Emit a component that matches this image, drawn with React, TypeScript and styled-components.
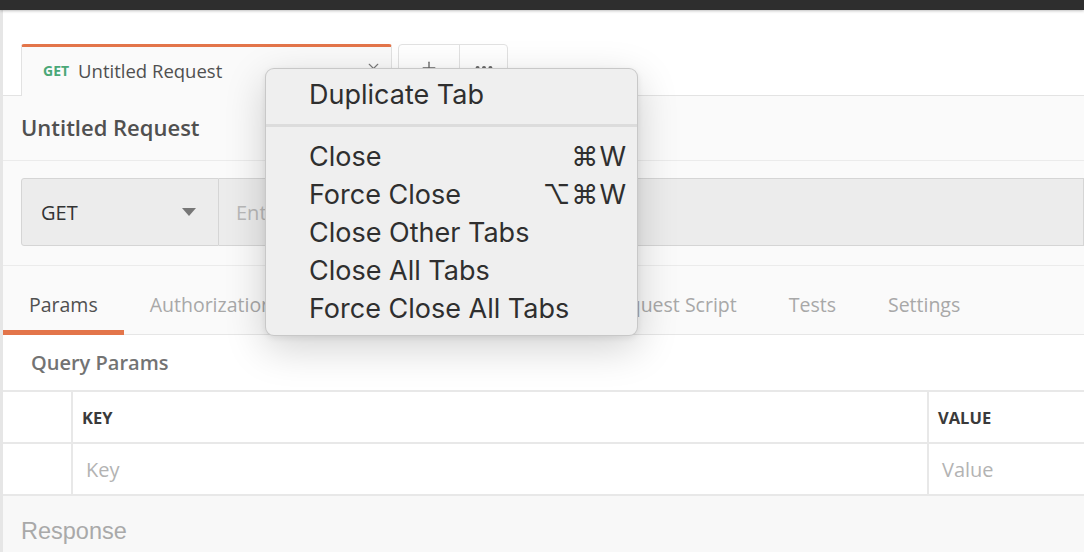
import styled, { createGlobalStyle } from 'styled-components'
import { X, Plus, Ellipsis } from 'lucide-react'

const GlobalStyle = createGlobalStyle`
  html, body {
    margin: 0;
    padding: 0;
    background: #ffffff;
  }
  body {
    font-family: "Open Sans", "Noto Sans", sans-serif;
  }
`

const menuItems = [
  { label: 'Close', keys: '⌘W' },
  { label: 'Force Close', keys: '⌥⌘W' },
  { label: 'Close Other Tabs', keys: '' },
  { label: 'Close All Tabs', keys: '' },
  { label: 'Force Close All Tabs', keys: '' },
]

const requestTabs = [
  { label: 'Params' },
  { label: 'Authorization' },
  { label: 'Headers', count: 7 },
  { label: 'Body' },
  { label: 'Pre-request Script' },
  { label: 'Tests' },
  { label: 'Settings' },
]

export const App = () => {
  return (
    <Screen>
      <GlobalStyle />
      <TitleBar />
      <Main>
        <TabBar>
          <RequestTab>
            <Method>GET</Method>
            <TabTitle>Untitled Request</TabTitle>
            <CloseIcon>
              <X size={17} strokeWidth={1.6} />
            </CloseIcon>
          </RequestTab>
          <TabActions>
            <ActionCell size={60}>
              <Plus size={20} strokeWidth={1.6} />
            </ActionCell>
            <ActionCell size={47}>
              <Ellipsis size={22} strokeWidth={2.4} />
            </ActionCell>
          </TabActions>
        </TabBar>

        <TitleRow>
          <Heading>Untitled Request</Heading>
        </TitleRow>

        <UrlRow>
          <MethodSelect>
            <span>GET</span>
            <Caret />
          </MethodSelect>
          <UrlInput>Enter request URL</UrlInput>
        </UrlRow>

        <TabsRow>
          {requestTabs.map((t, i) => (
            <TabItem key={t.label} active={i === 0}>
              {t.label}
              {t.count && <Count>({t.count})</Count>}
            </TabItem>
          ))}
        </TabsRow>

        <SectionLabel>Query Params</SectionLabel>

        <TableRow>
          <Cell width={70} />
          <Cell grow>
            <HeadText>KEY</HeadText>
          </Cell>
          <Cell width={155} last>
            <HeadText>VALUE</HeadText>
          </Cell>
        </TableRow>
        <TableRow>
          <Cell width={70} />
          <Cell grow>
            <Placeholder>Key</Placeholder>
          </Cell>
          <Cell width={155} last>
            <Placeholder>Value</Placeholder>
          </Cell>
        </TableRow>

        <ResponsePane>Response</ResponsePane>
      </Main>

      <ContextMenu>
        <MenuItem>
          <span>Duplicate Tab</span>
        </MenuItem>
        <Separator />
        {menuItems.map((m) => (
          <MenuItem key={m.label}>
            <span>{m.label}</span>
            <Shortcut>{m.keys}</Shortcut>
          </MenuItem>
        ))}
      </ContextMenu>
    </Screen>
  )
}
export default App

const Screen = styled.div`
  position: relative;
  width: 1084px;
  height: 552px;
  overflow: hidden;
  display: flex;
  flex-direction: column;
  background: #ffffff;
`

const TitleBar = styled.div`
  height: 10px;
  flex-shrink: 0;
  background: #2e2e2e;
  box-shadow: 0 1px 3px rgba(0, 0, 0, 0.25);
  position: relative;
  z-index: 1;
`

const Main = styled.div`
  flex: 1;
  display: flex;
  flex-direction: column;
  border-left: 3px solid #e6e6e6;
`

const TabBar = styled.div`
  height: 86px;
  flex-shrink: 0;
  box-sizing: border-box;
  display: flex;
  align-items: flex-start;
  padding: 34px 0 0 18px;
  border-bottom: 1px solid #e3e3e3;
  background: #ffffff;
`

const RequestTab = styled.div`
  width: 371px;
  height: 52px;
  box-sizing: border-box;
  display: flex;
  align-items: center;
  padding: 0 0 2px 21px;
  background: #fafafa;
  border: 1px solid #e2e2e2;
  border-top: 3px solid #e3754a;
  border-bottom: none;
  border-radius: 3px 3px 0 0;
  position: relative;
  z-index: 1;
`

const Method = styled.span`
  font-size: 14px;
  font-weight: 700;
  color: #4aa877;
  margin-right: 9px;
`

const TabTitle = styled.span`
  font-size: 18.5px;
  color: #505050;
  flex: 1;
`

const CloseIcon = styled.span`
  display: flex;
  color: #7a7a7a;
  margin-right: 9px;
  margin-top: -4px;
`

const TabActions = styled.div`
  display: flex;
  margin-left: 6px;
  height: 46px;
  border: 1px solid #e2e2e2;
  border-radius: 4px;
`

const ActionCell = styled.div<{ size: number }>`
  width: ${(p) => p.size}px;
  display: flex;
  justify-content: center;
  align-items: center;
  color: #666666;
  & + & {
    border-left: 1px solid #e2e2e2;
  }
`

const TitleRow = styled.div`
  height: 65px;
  flex-shrink: 0;
  box-sizing: border-box;
  display: flex;
  align-items: center;
  padding: 0 0 3px 18px;
  background: #fafafa;
  border-bottom: 1px solid #ebebeb;
`

const Heading = styled.h1`
  margin: 0;
  font-size: 22px;
  font-weight: 600;
  color: #505050;
`

const UrlRow = styled.div`
  height: 105px;
  flex-shrink: 0;
  box-sizing: border-box;
  display: flex;
  align-items: flex-start;
  padding: 17px 0 0 18px;
  background: #fafafa;
  border-bottom: 1px solid #ebebeb;
`

const MethodSelect = styled.div`
  width: 198px;
  height: 68px;
  box-sizing: border-box;
  display: flex;
  align-items: center;
  justify-content: space-between;
  padding: 0 22px 0 19px;
  background: #ececec;
  border: 1px solid #d5d5d5;
  border-radius: 3px 0 0 3px;
  font-size: 20px;
  font-weight: 500;
  color: #333333;
`

const Caret = styled.span`
  width: 0;
  height: 0;
  border-left: 7px solid transparent;
  border-right: 7px solid transparent;
  border-top: 8px solid #777777;
`

const UrlInput = styled.div`
  flex: 1;
  height: 68px;
  box-sizing: border-box;
  display: flex;
  align-items: center;
  padding-left: 17px;
  background: #ececec;
  border: 1px solid #d5d5d5;
  border-left: none;
  font-size: 20px;
  color: #b8b8b8;
`

const TabsRow = styled.div`
  height: 69px;
  flex-shrink: 0;
  box-sizing: border-box;
  display: flex;
  background: #fafafa;
  border-bottom: 1px solid #e6e6e6;
`

const TabItem = styled.div<{ active?: boolean }>`
  display: flex;
  align-items: center;
  padding: 12px 26px 0;
  font-size: 19.5px;
  color: ${(p) => (p.active ? '#505050' : '#a8a8a8')};
  border-bottom: 5px solid ${(p) => (p.active ? '#e3754a' : 'transparent')};
  margin-bottom: -1px;
`

const Count = styled.span`
  font-size: 15px;
  margin-left: 4px;
`

const SectionLabel = styled.div`
  height: 57px;
  flex-shrink: 0;
  box-sizing: border-box;
  display: flex;
  align-items: center;
  padding-left: 28px;
  font-size: 20px;
  font-weight: 600;
  color: #737373;
  border-bottom: 2px solid #e8e8e8;
`

const TableRow = styled.div`
  display: flex;
  height: 52px;
  flex-shrink: 0;
  box-sizing: border-box;
  border-bottom: 2px solid #e8e8e8;
`

const Cell = styled.div<{ width?: number; grow?: boolean; last?: boolean }>`
  ${(p) => (p.grow ? 'flex: 1;' : `width: ${p.width}px;`)}
  display: flex;
  align-items: center;
  padding-left: 9px;
  box-sizing: border-box;
  border-right: ${(p) => (p.last ? 'none' : '2px solid #e8e8e8')};
`

const HeadText = styled.span`
  font-size: 16.5px;
  font-weight: 700;
  color: #3a3a3a;
`

const Placeholder = styled.span`
  font-size: 20px;
  color: #b3b3b3;
  padding-left: 4px;
`

const ResponsePane = styled.div`
  flex: 1;
  background: #f8f8f8;
  padding: 22px 0 0 18px;
  font-family: "Liberation Sans", Arial, sans-serif;
  font-size: 23.5px;
  color: #a9a9a9;
`

const ContextMenu = styled.div`
  position: absolute;
  left: 265px;
  top: 68px;
  width: 373px;
  box-sizing: border-box;
  padding: 6px 0 8px;
  background: #efefef;
  border: 1px solid rgba(0, 0, 0, 0.16);
  border-radius: 9px;
  box-shadow: 0 12px 40px rgba(0, 0, 0, 0.18), 0 2px 6px rgba(0, 0, 0, 0.08);
  font-family: Inter, "DejaVu Sans", sans-serif;
  color: #2f2f2f;
  z-index: 5;
`

const MenuItem = styled.div`
  height: 38px;
  display: flex;
  align-items: center;
  justify-content: space-between;
  padding: 0 10px 0 43px;
  font-size: 27px;
`

const Shortcut = styled.span`
  letter-spacing: 1px;
`

const Separator = styled.div`
  height: 3px;
  margin: 11px 0 10px;
  background: #dcdcdc;
`
